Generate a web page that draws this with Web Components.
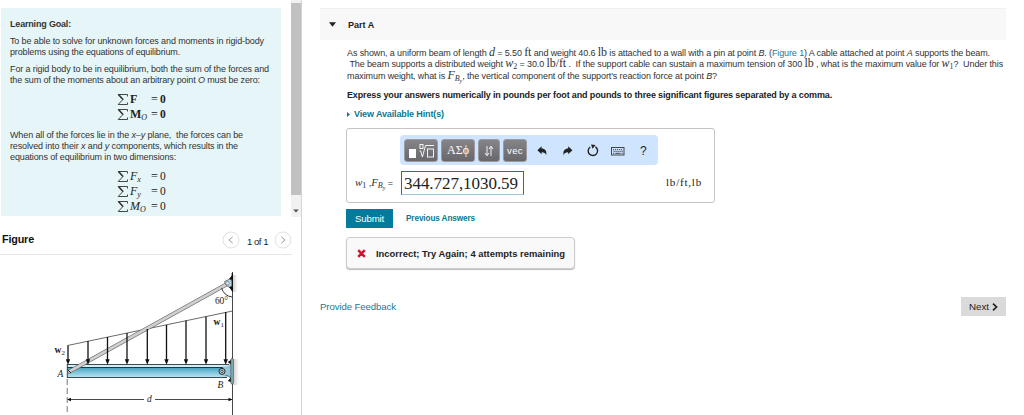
<!DOCTYPE html>
<html lang="en">
<head>
<meta charset="utf-8">
<title>Part A</title>
<style>
    html, body {
        margin: 0;
        height: 415px;
        overflow: hidden;
        background: #fff;
    }
    body {
        font-family: "Liberation Sans", Arial, sans-serif;
        font-size: 9px;
        color: #333;
    }
</style>
</head>
<body>
<problem-page></problem-page>

<script>
// styles shared by every component that shows formulas
const mathStyles = `
    .m { font-family: "Liberation Serif", "Times New Roman", serif; font-size: 12px; line-height: 0; }
    .m sub { font-size: 8px; vertical-align: -2px; line-height: 0; }
    .m sub sub { font-size: 6px; }
    i { font-style: italic; }
`

// base class: puts the template of the component in an open shadow root
class BaseElement extends HTMLElement {
    constructor() {
        super()
        this.attachShadow({mode: 'open'})
    }

    connectedCallback() {
        const template = document.createElement('template')
        template.innerHTML = `<style>${this.getStyles()}</style>${this.getTemplate()}`
        this.shadowRoot.appendChild(template.content.cloneNode(true))
    }
}

// one line of text, tracked so that it takes exactly "w" pixels
class TextLine extends BaseElement {
    getStyles() {
        return `
            :host { display: block; height: var(--h, 11px); line-height: var(--h, 11px); white-space: pre; }
            span { display: inline-block; }
        `
    }
    getTemplate() {
        return `<span><slot></slot></span>`
    }
    connectedCallback() {
        super.connectedCallback()
        const span = this.shadowRoot.querySelector('span')
        const width = Number(this.getAttribute('w'))
        if (!width) return
        const real = span.getBoundingClientRect().width
        span.style.letterSpacing = (width - real) / this.textContent.length + 'px'
    }
}

// sum = value
class SumEquation extends BaseElement {
    getStyles() {
        return `
            :host {
                display: grid;
                grid-template-columns: 13px 20px 9px 7px;
                align-items: center;
                height: 15px;
                font: 12px/15px "Liberation Serif", "Times New Roman", serif;
                color: #222;
            }
            svg { display: block; }
            .eq { font-size: 12px; padding-left: 1px; }
            .zero { font-size: 11.5px; padding-left: 1px; }
            :host([bold]) .zero { font-weight: bold; }
        `
    }
    getTemplate() {
        return `
        <svg width="12" height="13" viewBox="0 0 12 13" fill="none" stroke="#333">
            <path d="M10.5 3.5V1.5H1.2L6 6.4L1.2 11.5H10.5V9.5" stroke-width=".9"/>
            <path d="M1.5 1.5L6 6.4" stroke-width="1.5"/>
        </svg>
        <div><slot></slot></div>
        <div class="eq">=</div>
        <div class="zero">0</div>
        `
    }
}

class LearningGoal extends BaseElement {
    getStyles() {
        return `
            :host {
                display: block;
                box-sizing: border-box;
                width: 280px;
                height: 208px;
                margin-left: 1px;
                padding: 11px 9px 0;
                background: #e6f5f7;
            }
            .gap { margin-top: 6px; }
            .sums { margin-left: 107px; }
            ${mathStyles}
            sub { font-size: 8px; vertical-align: -2px; line-height: 0; }
        `
    }
    getTemplate() {
        return `
        <text-line w="61"><b>Learning Goal:</b></text-line>
        <text-line class="gap" w="254">To be able to solve for unknown forces and moments in rigid-body</text-line>
        <text-line w="170">problems using the equations of equilibrium.</text-line>
        <text-line class="gap" w="259">For a rigid body to be in equilibrium, both the sum of the forces and</text-line>
        <text-line w="250">the sum of the moments about an arbitrary point <i>O</i> must be zero:</text-line>
        <div class="sums" style="margin-top: 6px">
            <sum-equation bold><b>F</b></sum-equation>
            <sum-equation bold><b>M</b><sub><i>O</i></sub></sum-equation>
        </div>
        <text-line w="233" style="margin-top: 8px">When all of the forces lie in the <i>x–y</i> plane,  the forces can be</text-line>
        <text-line w="228">resolved into their <i>x</i> and <i>y</i> components, which results in the</text-line>
        <text-line w="166">equations of equilibrium in two dimensions:</text-line>
        <div class="sums" style="margin-top: 6px">
            <sum-equation><i>F<sub>x</sub></i></sum-equation>
            <sum-equation><i>F<sub>y</sub></i></sum-equation>
            <sum-equation><i>M<sub>O</sub></i></sum-equation>
        </div>
        `
    }
}

class ScrollBar extends BaseElement {
    getStyles() {
        return `
            :host { display: flex; flex-direction: column; width: 10px; height: 217px; background: #f1f1f1; }
            .thumb { height: 192px; margin-top: 3px; background: #c1c1c1; }
            svg { display: block; margin-top: 13px; }
        `
    }
    getTemplate() {
        return `
        <div class="thumb"></div>
        <svg width="10" height="6"><path d="M2.2 1.5H7.8L5 4.5Z" fill="#505050"/></svg>
        `
    }
}

class FigureHeader extends BaseElement {
    getStyles() {
        return `
            :host {
                display: flex;
                align-items: center;
                box-sizing: border-box;
                width: 292px;
                height: 28px;
                margin-top: 10px;
                padding: 0 0 1px 2px;
                border-bottom: 1px solid #e6e6e6;
                color: #222;
            }
            .title { flex: 1; font-size: 10.8px; color: #111; }
            .count { padding: 2px 6px 0 7px; font-size: 9.5px; }
            svg { display: block; }
        `
    }
    getTemplate() {
        return `
        <div class="title"><text-line w="32" style="--h: 22px; margin-bottom: 2px"><b>Figure</b></text-line></div>
        <svg width="18" height="18" fill="none"><circle cx="9" cy="9" r="8" stroke="#e2e2e2"/><path d="M10.7 5.8L7 9L10.7 12.2" stroke="#999"/></svg>
        <div class="count"><text-line w="21">1 of 1</text-line></div>
        <svg width="18" height="18" fill="none"><circle cx="9" cy="9" r="8" stroke="#e2e2e2"/><path d="M7.3 5.8L11 9L7.3 12.2" stroke="#999"/></svg>
        `
    }
}

// beam with the cable and the distributed load
class BeamFigure extends BaseElement {
    getStyles() {
        return `
            :host { display: block; height: 160px; }
            svg { display: block; }
            text { font-family: "Liberation Serif", "Times New Roman", serif; font-size: 9.5px; fill: #222; }
            .it { font-style: italic; }
            .bold { font-weight: bold; }
        `
    }
    // [x, top] of every arrow of the load
    getArrows() {
        const arrows = [[68, 345.5], [88, 341], [107.5, 337], [127, 333], [147.3, 329], [166.5, 325], [186, 320.5], [206, 316.5], [225.7, 312]]
        return arrows.map(([x, y]) => `
            <path d="M${x} ${y}V361" stroke="#111" stroke-width="1.3"/>
            <path d="M${x - 2.2} 359.3H${x + 2.2}L${x} 364.8Z" fill="#111"/>`).join('')
    }
    getTemplate() {
        return `
        <svg width="300" height="160" viewBox="0 255 300 160" fill="none">
            <defs>
                <linearGradient id="beam" x1="0" y1="0" x2="0" y2="1">
                    <stop offset="0" stop-color="#479fbd"/>
                    <stop offset=".45" stop-color="#78c1d9"/>
                    <stop offset="1" stop-color="#b5e2ef"/>
                </linearGradient>
                <linearGradient id="wall">
                    <stop offset="0" stop-color="#d2ccc3"/>
                    <stop offset="1" stop-color="#fff"/>
                </linearGradient>
            </defs>
            <rect x="232.5" y="275" width="5" height="17" fill="url(#wall)"/>
            <rect x="233" y="359" width="6" height="26" fill="url(#wall)"/>
            <path d="M232.5 272V415" stroke="#333" stroke-width=".9"/>
            <rect x="67.3" y="364.5" width="161" height="3" fill="#d5edf4"/>
            <rect x="67.3" y="367.5" width="161" height="9.5" fill="url(#beam)"/>
            <path d="M67 364.5H229M67 377.5H227M67.3 364V378" stroke="#29383e" stroke-width=".9"/>
            <path d="M67 367.5H228" stroke="#163c4b" stroke-width="1"/>
            <path d="M67.5 345.5L232.5 311" stroke="#444" stroke-width=".8"/>
            <path d="M68 372.3L229 283" stroke="#666" stroke-width="4"/>
            <path d="M68.4 372L229 283" stroke="#cfcfcf" stroke-width="2.6"/>
            <path d="M67.5 369.5L71 373" stroke="#222"/>
            ${this.getArrows()}
            <path d="M224.5 281.5L230 279L232.5 281V287L229.5 287.5L226 285Z" fill="#b5d6df" stroke="#53666e" stroke-width=".8"/>
            <circle cx="227.5" cy="283.2" r="1.8" fill="#e0e9eb" stroke="#666" stroke-width=".6"/>
            <path d="M232.7 274.5L229 279L232.5 280ZM229 287L232.7 286V292Z" fill="#111"/>
            <path d="M232.3 273V291" stroke="#111" stroke-width="1.3"/>
            <path d="M221.5 287.8Q224 296 232 297" stroke="#333"/>
            <path d="M223 366.5H227L231 363.5V379L227 375.7H222Z" fill="#94c8d8"/>
            <path d="M225 375.7H228L231 378" stroke="#48656f" stroke-width=".8"/>
            <rect x="230.8" y="358.5" width="2.6" height="25.5" rx="1.2" fill="#7faebd" stroke="#444" stroke-width=".6"/>
            <path d="M230.8 360L227.8 362L230.8 364.5ZM230.8 377.5L227.8 381L230.8 382Z" fill="#111"/>
            <circle cx="222" cy="371.4" r="3" fill="#b8dae4" stroke="#222"/>
            <circle cx="222" cy="371.4" r="1.2" fill="#e1edf0" stroke="#222" stroke-width=".8"/>
            <path d="M67.2 379V415" stroke="#666" stroke-width=".9" stroke-dasharray="6 3"/>
            <path d="M68 399.5H144M155 399.5H232" stroke="#333" stroke-width=".9"/>
            <path d="M67 399.5L71 397.7V401.3ZM232.5 399.5L228.5 397.7V401.3Z" fill="#111"/>
            <text class="it" x="147" y="402">d</text>
            <text x="215" y="304.3" textLength="13">60°</text>
            <text class="bold" x="213.5" y="325">w<tspan font-size="7" dy="2" font-weight="normal">1</tspan></text>
            <text class="bold" x="54.5" y="352.5">w<tspan font-size="7" dy="2" font-weight="normal">2</tspan></text>
            <text class="it" x="57.5" y="376.7">A</text>
            <text class="it" x="217.5" y="387.5">B</text>
        </svg>
        `
    }
}

class LeftPanel extends BaseElement {
    getStyles() {
        return `
            :host { display: block; box-sizing: border-box; width: 302px; height: 415px; border-right: 1px solid #ced8da; }
            .top { display: flex; justify-content: space-between; height: 217px; }
            learning-goal { margin-top: 8px; }
        `
    }
    getTemplate() {
        return `
        <div class="top">
            <learning-goal></learning-goal>
            <scroll-bar></scroll-bar>
        </div>
        <figure-header></figure-header>
        <beam-figure></beam-figure>
        `
    }
}

class PartHeader extends BaseElement {
    getStyles() {
        return `
            :host {
                display: flex;
                align-items: center;
                gap: 12px;
                box-sizing: border-box;
                width: 686px;
                height: 32px;
                padding-left: 9px;
                background: #f8f8f8;
                border-top: 1px solid #f0f0f0;
                color: #222;
            }
        `
    }
    getTemplate() {
        return `
        <svg width="7" height="5"><path d="M0 .3H7L3.5 4.7Z" fill="#222"/></svg>
        <text-line w="28" style="padding-top: 1px"><b><slot></slot></b></text-line>
        `
    }
}

class QuestionText extends BaseElement {
    getStyles() {
        return `
            :host { display: block; padding: 8px 0 0 27px; }
            .link { color: #1d7a95; }
            .strong { color: #222; font-weight: bold; }
            .hints { display: flex; align-items: center; gap: 4px; margin-top: 8px; color: #0b7791; font-weight: bold; }
            ${mathStyles}
        `
    }
    getTemplate() {
        return `
        <text-line w="643">As shown, a uniform beam of length <i class="m">d</i> = 5.50 <span class="m">ft</span> and weight 40.6 <span class="m">lb</span> is attached to a wall with a pin at point <i>B</i>. (<span class="link">Figure 1</span>) A cable attached at point <i>A</i> supports the beam.</text-line>
        <text-line w="656">&nbsp;The beam supports a distributed weight <span class="m"><i>w</i><sub>2</sub></span> = 30.0 <span class="m">lb/ft</span> .  If the support cable can sustain a maximum tension of 300 <span class="m">lb</span> , what is the maximum value for <span class="m"><i>w</i><sub>1</sub></span>?  Under this</text-line>
        <text-line w="370" style="--h: 12px">maximum weight, what is <i class="m">F<sub>B<sub>y</sub></sub></i>, the vertical component of the support's reaction force at point <i>B</i>?</text-line>
        <text-line class="strong" w="485" style="margin-top: 8px">Express your answers numerically in pounds per foot and pounds to three significant figures separated by a comma.</text-line>
        <div class="hints">
            <svg width="3" height="5"><path d="M0 0L3 2.5L0 5Z" fill="#0b7791"/></svg>
            <text-line w="90">View Available Hint(s)</text-line>
        </div>
        `
    }
}

class ToolButton extends BaseElement {
    getStyles() {
        return `
            :host {
                display: flex;
                align-items: center;
                justify-content: center;
                box-sizing: border-box;
                height: 23px;
                border: 1px solid #9a9a9e;
                border-radius: 3px;
                background: linear-gradient(#858589, #68686c);
                color: #fff;
            }
        `
    }
    getTemplate() {
        return `<slot></slot>`
    }
}

class MathToolbar extends BaseElement {
    getStyles() {
        return `
            :host {
                display: flex;
                align-items: center;
                box-sizing: border-box;
                width: 258px;
                height: 30px;
                padding: 1px 0 0 4px;
                border-radius: 4px;
                background: #cfe5ff;
            }
            .buttons { display: flex; gap: 3px; }
            .icons { display: flex; align-items: center; margin-left: 10px; }
            svg { display: block; }
            .help { font-size: 12px; color: #222; margin-left: 15px; }
        `
    }
    getTemplate() {
        return `
        <div class="buttons">
            <tool-button style="width: 34px">
                <svg width="27" height="16" fill="none" stroke="#fff" stroke-width=".9">
                    <rect x="1" y="6" width="7" height="9" fill="#fff" stroke="none"/>
                    <rect x="12" y="1.5" width="3" height="4"/>
                    <path d="M11.5 8H12.7L14.4 14L17.5 2.5H26"/>
                    <rect x="19.5" y="6" width="6" height="8"/>
                </svg>
            </tool-button>
            <tool-button style="width: 34px; font: 12px 'Liberation Serif', serif"><text-line w="22">ΑΣϕ</text-line></tool-button>
            <tool-button style="width: 22px">
                <svg width="10" height="12" fill="none" stroke="#fff"><path d="M3 1V10.5M1 8L3 10.7L5 8M7 11V1.3M5 4L7 1.3L9 4" stroke-width=".9"/></svg>
            </tool-button>
            <tool-button style="width: 24px; font-size: 9.5px"><text-line w="16">vec</text-line></tool-button>
        </div>
        <div class="icons">
            <svg width="11" height="10"><path d="M0.4 4.2L4.6 0.3V2.6C8 2.6 10 4.8 9.2 9.2C8.4 7 7.3 6.2 4.6 6.2V8.2Z" fill="#222"/></svg>
            <svg width="11" height="10" style="margin-left: 14px"><path d="M10.4 4.2L6.2 0.3V2.6C2.8 2.6 .8 4.8 1.6 9.2C2.4 7 3.5 6.2 6.2 6.2V8.2Z" fill="#222"/></svg>
            <svg width="12" height="13" style="margin-left: 14px" fill="none"><path d="M3.2 3A4.7 4.7 0 1 0 8.4 2.9" stroke="#222" stroke-width="1.4"/><path d="M4 .6L8.5 1L5.6 4.8Z" fill="#222"/></svg>
            <svg width="14" height="9" style="margin: 2px 0 0 12px" fill="none" stroke="#444"><rect x=".5" y=".5" width="12.5" height="7.5"/><path d="M2 2.7H12M2.5 4.4H12" stroke-width="1" stroke-dasharray="1.2 .8"/><path d="M2 6.3H3.3M4.3 6.3H9.5M10.5 6.3H11.8"/></svg>
            <div class="help">?</div>
        </div>
        `
    }
}

class AnswerBox extends BaseElement {
    getStyles() {
        return `
            :host {
                display: block;
                box-sizing: border-box;
                width: 369px;
                height: 75px;
                margin: 8px 0 0 26px;
                padding-top: 6px;
                border: 1px solid #c4c4c4;
                border-radius: 3px;
            }
            math-toolbar { margin-left: 53px; }
            .row { display: flex; align-items: center; margin-top: 6px; }
            .label { width: 46px; padding-left: 8px; }
            .input {
                box-sizing: border-box;
                width: 123px;
                height: 24px;
                padding: 0 2px;
                border: 1px solid #3f5f9e;
                border-bottom-color: #9fc5d8;
                font: 17px "Liberation Serif", "Times New Roman", serif;
                color: #222;
            }
            .units { margin-left: 142px; }
            ${mathStyles}
            .label .m { font-size: 11px; }
            .units .m { font-size: 11px; color: #222; }
        `
    }
    getTemplate() {
        return `
        <math-toolbar></math-toolbar>
        <div class="row">
            <div class="label"><text-line w="38"><span class="m"><i>w</i><sub>1</sub></span> ,<i class="m">F<sub>B<sub>y</sub></sub></i> =</text-line></div>
            <div class="input"><text-line w="114" style="--h: 23px">344.727,1030.59</text-line></div>
            <div class="units"><text-line w="36"><span class="m">lb/ft,lb</span></text-line></div>
        </div>
        `
    }
}

class SubmitRow extends BaseElement {
    getStyles() {
        return `
            :host { display: flex; align-items: center; gap: 13px; margin: 6px 0 0 26px; }
            .submit {
                display: flex;
                align-items: center;
                justify-content: center;
                width: 47px;
                height: 19px;
                background: #047a9c;
                color: #fff;
                font-size: 9.6px;
            }
            .previous { color: #0b7791; font-weight: bold; font-size: 8.2px; }
        `
    }
    getTemplate() {
        return `
        <div class="submit"><text-line w="29">Submit</text-line></div>
        <div class="previous"><text-line w="69">Previous Answers</text-line></div>
        `
    }
}

class FeedbackBox extends BaseElement {
    getStyles() {
        return `
            :host {
                display: flex;
                align-items: center;
                gap: 10px;
                box-sizing: border-box;
                width: 229px;
                height: 32px;
                margin: 9px 0 0 26px;
                padding-left: 10px;
                border: 1px solid #cdcdcd;
                border-radius: 4px;
                box-shadow: 0 1px 1px #bbb;
                background: #f9f9f9;
                color: #222;
                font-size: 9.4px;
            }
        `
    }
    // the message is slotted two levels deep, so its width is set on the text itself
    getTemplate() {
        return `
        <svg width="9" height="9"><path d="M1.2 1.2L7.8 7.8M7.8 1.2L1.2 7.8" stroke="#d6122d" stroke-width="2.5"/></svg>
        <text-line style="padding-top: 1px; letter-spacing: .02px"><b><slot></slot></b></text-line>
        `
    }
}

class PageFooter extends BaseElement {
    getStyles() {
        return `
            :host { display: flex; align-items: center; justify-content: space-between; margin-top: 28px; }
            .feedback { color: #1d7a95; font-size: 9.6px; }
            .next {
                display: flex;
                align-items: center;
                justify-content: center;
                gap: 3px;
                width: 45px;
                height: 19px;
                background: #dadada;
                color: #222;
                font-size: 9.8px;
            }
        `
    }
    getTemplate() {
        return `
        <div class="feedback"><text-line w="76">Provide Feedback</text-line></div>
        <div class="next"><text-line w="20">Next</text-line><svg width="6" height="8"><path d="M1 .7L4.5 4L1 7.3" fill="none" stroke="#222" stroke-width="1.7"/></svg></div>
        `
    }
}

class RightPanel extends BaseElement {
    getStyles() {
        return `
            :host { display: block; width: 686px; padding: 8px 0 0 18px; }
        `
    }
    getTemplate() {
        return `
        <part-header>Part A</part-header>
        <question-text></question-text>
        <answer-box></answer-box>
        <submit-row></submit-row>
        <feedback-box>Incorrect; Try Again; 4 attempts remaining</feedback-box>
        <page-footer></page-footer>
        `
    }
}

class ProblemPage extends BaseElement {
    getStyles() {
        return `
            :host { display: flex; width: 1024px; height: 415px; overflow: hidden; }
        `
    }
    getTemplate() {
        return `<left-panel></left-panel><right-panel></right-panel>`
    }
}

customElements.define('text-line', TextLine)
customElements.define('sum-equation', SumEquation)
customElements.define('learning-goal', LearningGoal)
customElements.define('scroll-bar', ScrollBar)
customElements.define('figure-header', FigureHeader)
customElements.define('beam-figure', BeamFigure)
customElements.define('left-panel', LeftPanel)
customElements.define('part-header', PartHeader)
customElements.define('question-text', QuestionText)
customElements.define('tool-button', ToolButton)
customElements.define('math-toolbar', MathToolbar)
customElements.define('answer-box', AnswerBox)
customElements.define('submit-row', SubmitRow)
customElements.define('feedback-box', FeedbackBox)
customElements.define('page-footer', PageFooter)
customElements.define('right-panel', RightPanel)
customElements.define('problem-page', ProblemPage)
</script>
</body>
</html>
